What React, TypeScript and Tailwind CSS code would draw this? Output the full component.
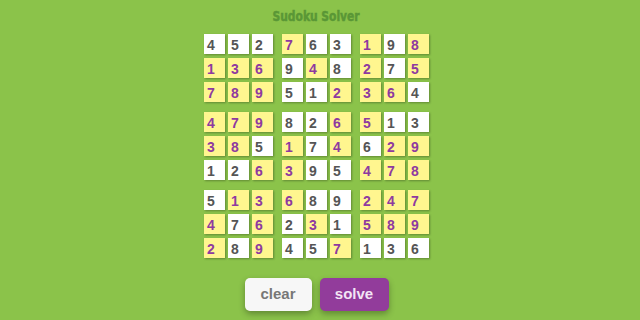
const board: string[] = [
  "452763198",
  "136948275",
  "789512364",
  "479826513",
  "385174629",
  "126395478",
  "513689247",
  "476231589",
  "289457136",
];

// 1 = filled in by the solver (yellow cell, purple digit)
const solved: string[] = [
  "000100101",
  "111010101",
  "111001110",
  "111001100",
  "110101011",
  "001100111",
  "011100111",
  "101010111",
  "101001000",
];

function Cell({ value, isSolved }: { value: string; isSolved: boolean }) {
  return (
    <div
      className={`w-[21px] h-[20px] flex items-center pl-[3px] pt-[1px] text-[14px] font-bold leading-none shadow-[1px_1px_2px_rgba(0,0,0,0.3)] ${
        isSolved ? "bg-[#fff68f] text-[#8e3aa0]" : "bg-white text-[#555555]"
      }`}
    >
      {value}
    </div>
  );
}

function Block({ br, bc }: { br: number; bc: number }) {
  const cells = [];
  for (let r = 0; r < 3; r++) {
    for (let c = 0; c < 3; c++) {
      const row = br * 3 + r;
      const col = bc * 3 + c;
      cells.push(
        <Cell key={`${r}-${c}`} value={board[row][col]} isSolved={solved[row][col] === "1"} />
      );
    }
  }
  return <div className="grid grid-cols-[repeat(3,21px)] gap-x-[3px] gap-y-[4px]">{cells}</div>;
}

export default function App() {
  return (
    <div
      className="w-[640px] h-[320px] bg-[#8bc34a] flex flex-col items-center pr-[7px] overflow-hidden"
      style={{ fontFamily: '"Liberation Sans", Arial, sans-serif' }}
    >
      {/* narrow, heavy heading: DejaVu Condensed squeezed a bit further */}
      <h1
        className="mt-[8px] text-[14.5px] leading-[16px] font-bold text-[#5a9736] scale-x-[0.82] [-webkit-text-stroke:0.5px_#5a9736]"
        style={{ fontFamily: '"DejaVu Sans Condensed", "DejaVu Sans", sans-serif' }}
      >
        Sudoku Solver
      </h1>

      <div className="mt-[10px] flex flex-col gap-[10px]">
        {[0, 1, 2].map((br) => (
          <div key={br} className="flex gap-[9px]">
            {[0, 1, 2].map((bc) => (
              <Block key={bc} br={br} bc={bc} />
            ))}
          </div>
        ))}
      </div>

      <div className="mt-[20px] flex gap-[8px]">
        <button className="w-[67px] h-[33px] rounded-[5px] bg-[#f7f7f7] text-[#777777] text-[15px] font-bold shadow-[0_3px_6px_rgba(0,0,0,0.3)]">
          clear
        </button>
        <button className="w-[69px] h-[33px] rounded-[5px] bg-[#923c9b] text-[#f3e5f5] text-[15px] font-bold shadow-[0_3px_6px_rgba(0,0,0,0.3)]">
          solve
        </button>
      </div>
    </div>
  );
}
